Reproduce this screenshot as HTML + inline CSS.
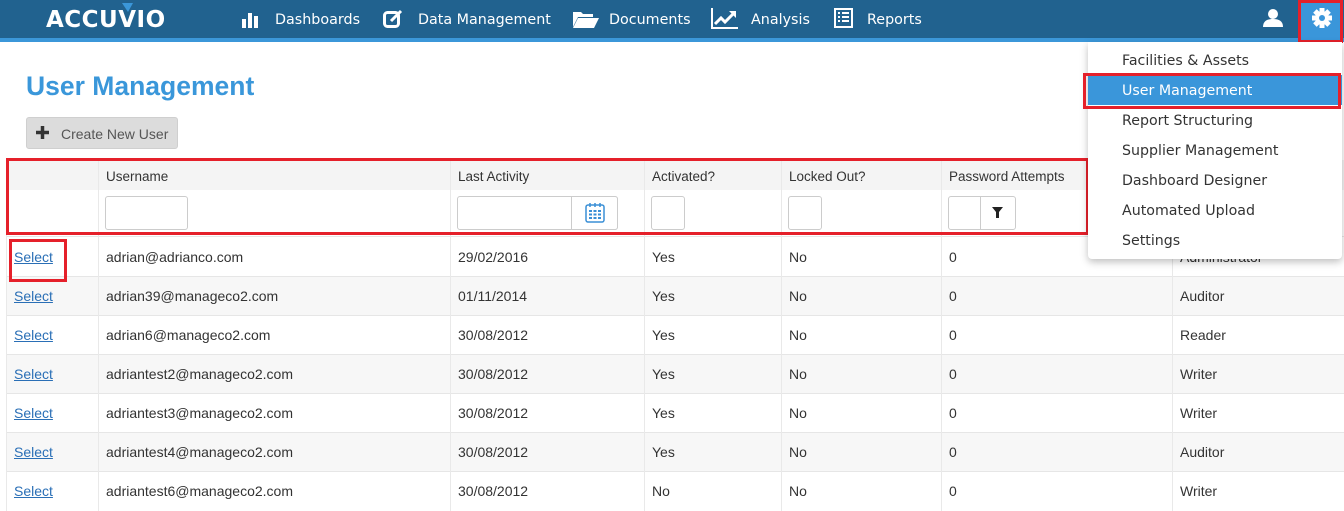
<!DOCTYPE html>
<html><head><meta charset="utf-8"><style>
*{box-sizing:border-box;margin:0;padding:0}
body{width:1344px;height:511px;overflow:hidden;background:#fff;font-family:"Liberation Sans",Arial,sans-serif;position:relative}
.nav{position:absolute;left:0;top:0;width:1344px;height:38px;background:#21628f}
.stripe{position:absolute;left:0;top:38px;width:1344px;height:4px;background:#3b97d9}
.ni{position:absolute;top:12px;color:#fff;font-family:"DejaVu Sans",sans-serif;font-size:14.3px}
.abs{position:absolute}
h1{position:absolute;left:26px;top:71px;font-size:26.5px;font-weight:bold;color:#3a97da}
.btn{position:absolute;left:26px;top:117px;width:152px;height:32px;background:#dcdcdc;border:1px solid #cfcfcf;border-radius:3px;color:#555;font-size:14px;padding:8px 0 0 34px}
.hdr{position:absolute;left:6px;top:160px;width:1338px;height:30px;background:#f4f4f4}
.th{position:absolute;top:169px;font-size:13.5px;color:#333}
.inp{position:absolute;top:196px;height:34px;border:1px solid #ccc;border-radius:3px;background:#fff}
.row{position:absolute;left:6px;width:1338px;height:39px;border-top:1px solid #e6e6e6}
.row.g{background:#f7f7f7}
.td{position:absolute;font-size:14px;color:#333}
.sel{color:#2a6fb6;text-decoration:underline}
.vl{position:absolute;top:160px;width:1px;height:351px;background:#e9e9e9}
.red{position:absolute;border:3px solid #e5202a}
.menu{position:absolute;left:1088px;top:42px;width:254px;height:217px;background:#fff;box-shadow:0 3px 8px rgba(0,0,0,.25);border-radius:0 0 4px 4px}
.mi{position:absolute;left:34px;font-family:"DejaVu Sans",sans-serif;font-size:14.2px;color:#333}
</style></head><body>
<div class="nav"></div><div class="stripe"></div>
<div class="abs" style="left:46px;top:7px;color:#fff;font-weight:bold;font-size:23px;letter-spacing:0.5px;font-family:'DejaVu Sans',sans-serif">ACCUVIO</div>
<svg class="abs" style="left:122px;top:3px" width="14" height="9"><polygon points="0,0 11,0 6,9" fill="#3b97d9"/></svg>
<svg class="abs" style="left:242px;top:11px" width="20" height="17"><rect x="0" y="8" width="4" height="9" fill="#fff"/><rect x="6" y="2" width="4" height="15" fill="#fff"/><rect x="12" y="5" width="4" height="12" fill="#fff"/></svg>
<div class="ni" style="left:275px">Dashboards</div>
<svg class="abs" style="left:383px;top:8px" width="22" height="21"><rect x="1.5" y="4.5" width="14" height="14" rx="3" fill="none" stroke="#fff" stroke-width="3"/><path d="M8 13 L18 3" stroke="#fff" stroke-width="3"/></svg>
<div class="ni" style="left:418px">Data Management</div>
<svg class="abs" style="left:573px;top:10px" width="26" height="18"><path d="M0 2h8l2 2h10v3H5L0 17z M5 8h21l-5 10H0z" fill="#fff"/></svg>
<div class="ni" style="left:609px">Documents</div>
<svg class="abs" style="left:711px;top:8px" width="27" height="22"><path d="M1 0v20h26" stroke="#fff" stroke-width="2" fill="none"/><path d="M4 16l6-6 4 4 8-8" stroke="#fff" stroke-width="3" fill="none"/><polygon points="18,3 25,3 25,10" fill="#fff"/></svg>
<div class="ni" style="left:751px">Analysis</div>
<svg class="abs" style="left:834px;top:8px" width="19" height="20"><rect x="1" y="1" width="17" height="18" fill="none" stroke="#fff" stroke-width="2"/><path d="M4 5h2M8 5h7M4 9h2M8 9h7M4 13h2M8 13h7" stroke="#fff" stroke-width="2"/></svg>
<div class="ni" style="left:867px">Reports</div>
<svg class="abs" style="left:1263px;top:8px" width="20" height="20"><circle cx="10" cy="6" r="5" fill="#fff"/><path d="M0 19c0-6 4-8 10-8s10 2 10 8z" fill="#fff"/></svg>
<div class="abs" style="left:1301px;top:0;width:40px;height:41px;background:#3a96da"></div>
<svg class="abs" style="left:1311px;top:7px" width="22" height="22" viewBox="-11 -11 22 22"><g fill="#fff"><circle r="7"/><rect x="-2.5" y="-10" width="5" height="20"/><rect x="-2.5" y="-10" width="5" height="20" transform="rotate(45)"/><rect x="-2.5" y="-10" width="5" height="20" transform="rotate(90)"/><rect x="-2.5" y="-10" width="5" height="20" transform="rotate(135)"/></g><circle r="3" fill="#3a96da"/></svg>
<div class="red" style="left:1298px;top:0;width:45px;height:43px"></div>

<h1>User Management</h1>
<div class="btn">Create New User</div>
<svg class="abs" style="left:36px;top:126px" width="13" height="13"><path d="M6.5 0v13M0 6.5h13" stroke="#333" stroke-width="3.5"/></svg>

<div class="hdr"></div>
<div class="th" style="left:106px">Username</div>
<div class="th" style="left:458px">Last Activity</div>
<div class="th" style="left:652px">Activated?</div>
<div class="th" style="left:789px">Locked Out?</div>
<div class="th" style="left:949px">Password Attempts</div>
<div class="inp" style="left:105px;width:83px"></div>
<div class="inp" style="left:457px;width:161px"></div>
<div class="abs" style="left:571px;top:196px;width:47px;height:34px;border:1px solid #ccc;border-radius:0 3px 3px 0;background:#fff"></div>
<svg class="abs" style="left:585px;top:202px" width="20" height="21"><rect x="1" y="3" width="18" height="17" rx="2" fill="none" stroke="#3a8fd6" stroke-width="1.5"/><path d="M5 1v4M10 1v4M15 1v4" stroke="#3a8fd6" stroke-width="1.5"/><g fill="#3a8fd6"><rect x="4" y="8" width="3" height="2"/><rect x="8.5" y="8" width="3" height="2"/><rect x="13" y="8" width="3" height="2"/><rect x="4" y="11.5" width="3" height="2"/><rect x="8.5" y="11.5" width="3" height="2"/><rect x="13" y="11.5" width="3" height="2"/><rect x="4" y="15" width="3" height="2"/><rect x="8.5" y="15" width="3" height="2"/><rect x="13" y="15" width="3" height="2"/></g></svg>
<div class="inp" style="left:651px;width:34px"></div>
<div class="inp" style="left:788px;width:34px"></div>
<div class="inp" style="left:948px;width:68px"></div>
<div class="abs" style="left:980px;top:196px;width:1px;height:34px;background:#ccc"></div>
<svg class="abs" style="left:992px;top:207px" width="11" height="11"><path d="M0 0h11L7 5v6H4V5z" fill="#222"/></svg>

<div class="row" style="top:236px"></div>
<div class="row g" style="top:276px"></div>
<div class="row" style="top:315px"></div>
<div class="row g" style="top:354px"></div>
<div class="row" style="top:393px"></div>
<div class="row g" style="top:432px"></div>
<div class="row" style="top:471px"></div>
<div class="vl" style="left:6px"></div><div class="vl" style="left:98px"></div><div class="vl" style="left:450px"></div><div class="vl" style="left:644px"></div><div class="vl" style="left:781px"></div><div class="vl" style="left:941px"></div><div class="vl" style="left:1172px"></div>

<div class="td sel" style="left:14px;top:249px">Select</div><div class="td" style="left:106px;top:249px">adrian@adrianco.com</div><div class="td" style="left:458px;top:249px">29/02/2016</div><div class="td" style="left:652px;top:249px">Yes</div><div class="td" style="left:789px;top:249px">No</div><div class="td" style="left:949px;top:249px">0</div><div class="td" style="left:1180px;top:249px">Administrator</div>
<div class="td sel" style="left:14px;top:288px">Select</div><div class="td" style="left:106px;top:288px">adrian39@manageco2.com</div><div class="td" style="left:458px;top:288px">01/11/2014</div><div class="td" style="left:652px;top:288px">Yes</div><div class="td" style="left:789px;top:288px">No</div><div class="td" style="left:949px;top:288px">0</div><div class="td" style="left:1180px;top:288px">Auditor</div>
<div class="td sel" style="left:14px;top:327px">Select</div><div class="td" style="left:106px;top:327px">adrian6@manageco2.com</div><div class="td" style="left:458px;top:327px">30/08/2012</div><div class="td" style="left:652px;top:327px">Yes</div><div class="td" style="left:789px;top:327px">No</div><div class="td" style="left:949px;top:327px">0</div><div class="td" style="left:1180px;top:327px">Reader</div>
<div class="td sel" style="left:14px;top:366px">Select</div><div class="td" style="left:106px;top:366px">adriantest2@manageco2.com</div><div class="td" style="left:458px;top:366px">30/08/2012</div><div class="td" style="left:652px;top:366px">Yes</div><div class="td" style="left:789px;top:366px">No</div><div class="td" style="left:949px;top:366px">0</div><div class="td" style="left:1180px;top:366px">Writer</div>
<div class="td sel" style="left:14px;top:405px">Select</div><div class="td" style="left:106px;top:405px">adriantest3@manageco2.com</div><div class="td" style="left:458px;top:405px">30/08/2012</div><div class="td" style="left:652px;top:405px">Yes</div><div class="td" style="left:789px;top:405px">No</div><div class="td" style="left:949px;top:405px">0</div><div class="td" style="left:1180px;top:405px">Writer</div>
<div class="td sel" style="left:14px;top:444px">Select</div><div class="td" style="left:106px;top:444px">adriantest4@manageco2.com</div><div class="td" style="left:458px;top:444px">30/08/2012</div><div class="td" style="left:652px;top:444px">Yes</div><div class="td" style="left:789px;top:444px">No</div><div class="td" style="left:949px;top:444px">0</div><div class="td" style="left:1180px;top:444px">Auditor</div>
<div class="td sel" style="left:14px;top:483px">Select</div><div class="td" style="left:106px;top:483px">adriantest6@manageco2.com</div><div class="td" style="left:458px;top:483px">30/08/2012</div><div class="td" style="left:652px;top:483px">No</div><div class="td" style="left:789px;top:483px">No</div><div class="td" style="left:949px;top:483px">0</div><div class="td" style="left:1180px;top:483px">Writer</div>

<div class="red" style="left:6px;top:158px;width:1083px;height:77px"></div>
<div class="red" style="left:9px;top:239px;width:58px;height:43px"></div>

<div class="menu">
<div class="mi" style="top:11px">Facilities &amp; Assets</div>
<div class="abs" style="left:0;top:33px;width:254px;height:30px;background:#3a96da"></div>
<div class="mi" style="top:41px;color:#fff">User Management</div>
<div class="mi" style="top:71px">Report Structuring</div>
<div class="mi" style="top:101px">Supplier Management</div>
<div class="mi" style="top:131px">Dashboard Designer</div>
<div class="mi" style="top:161px">Automated Upload</div>
<div class="mi" style="top:191px">Settings</div>
</div>
<div class="red" style="left:1083px;top:73px;width:258px;height:36px"></div>
</body></html>
